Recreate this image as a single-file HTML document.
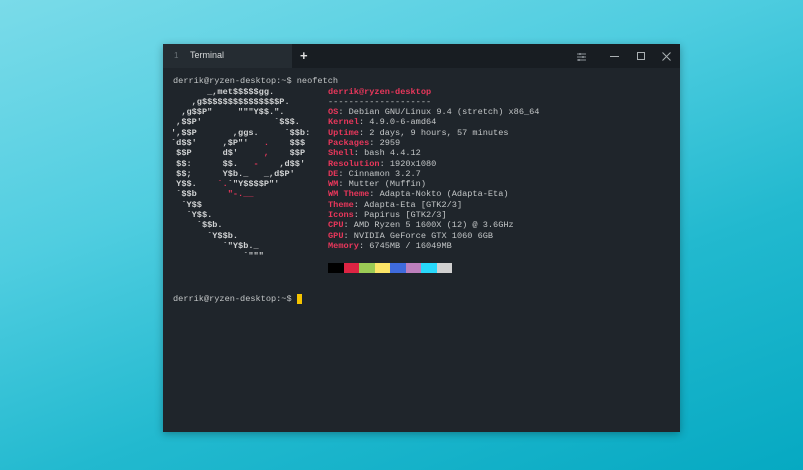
<!DOCTYPE html>
<html><head><meta charset="utf-8"><style>
html,body{margin:0;padding:0;width:803px;height:470px;overflow:hidden}
body{background:linear-gradient(160deg,#7adbe9 0%,#4fcde0 35%,#22b9cf 65%,#06a9c2 100%);position:relative;font-family:"Liberation Sans",sans-serif}
.win{position:absolute;left:163px;top:44px;width:517px;height:388px;background:#1f252b;box-shadow:0 2px 8px rgba(0,0,0,.3)}
.bar{position:absolute;left:0;top:0;width:517px;height:24px;background:#181d22}
.tab{position:absolute;left:0;top:0;width:129px;height:24px;background:#252c32;color:#d8dadb;font-size:9px}
.tab .n{position:absolute;left:11px;top:7px;color:#6b7378;font-size:8px}
.tab .t{position:absolute;left:27px;top:6px}
.plus{position:absolute;left:137px;top:4px;color:#e0e0e0;font-size:13px;font-weight:bold}
.ic{position:absolute;top:6px;color:#9aa1a5}
pre{margin:0;position:absolute;font-family:"Liberation Mono",monospace;font-size:8.6px;line-height:10.3px;color:#c3c6c7}
.lg{font-weight:bold;color:#d0d2d3}
.r{color:#e8375b;font-weight:bold}
.rn{color:#e8375b}
.sw{position:absolute;top:219px;height:10px;width:15.5px}
.cur{position:absolute;left:134px;top:250px;width:5px;height:10px;background:#f5c400}
</style></head><body>
<div class="win">
 <div class="bar"></div>
 <div class="tab"><span class="n">1</span><span class="t">Terminal</span></div>
 <div class="plus">+</div>
 <svg class="ic" style="left:414px;top:8px" width="9" height="9" viewBox="0 0 9 9" stroke="#8a9196" stroke-width="1" fill="none"><path d="M0 2h9M0 5h9M0 8h9"/><path d="M3 1v2M6 4v2M2 7v2" stroke-width="1.5"/></svg>
 <svg class="ic" style="left:447px;top:8px" width="9" height="9"><path d="M0 4.5h9" stroke="#aab0b3"/></svg>
 <svg class="ic" style="left:474px;top:8px" width="9" height="9"><rect x=".5" y=".5" width="7" height="7" stroke="#aab0b3" fill="none"/></svg>
 <svg class="ic" style="left:499px;top:8px" width="9" height="9"><path d="M.5 .5l8 8M8.5 .5l-8 8" stroke="#aab0b3"/></svg>
<pre style="left:10px;top:32px">derrik@ryzen-desktop:~$ neofetch</pre>
<pre class="lg" style="left:8px;top:42.5px">       _,met$$$$$gg.
    ,g$$$$$$$$$$$$$$$P.
  ,g$$P"     """Y$$.".
 ,$$P'              `$$$.
',$$P       ,ggs.     `$$b:
`d$$'     ,$P"'   <span class="rn">.</span>    $$$
 $$P      d$'     <span class="rn">,</span>    $$P
 $$:      $$.   <span class="rn">-</span>    ,d$$'
 $$;      Y$b._   _,d$P'
 Y$$.    <span class="rn">`.</span>`"Y$$$$P"'
 `$$b      <span class="rn">"-.__</span>
  `Y$$
   `Y$$.
     `$$b.
       `Y$$b.
          `"Y$b._
              `"""</pre>
<pre style="left:165px;top:42.5px"><span class="r">derrik@ryzen-desktop</span>
--------------------
<span class="r">OS</span>: Debian GNU/Linux 9.4 (stretch) x86_64
<span class="r">Kernel</span>: 4.9.0-6-amd64
<span class="r">Uptime</span>: 2 days, 9 hours, 57 minutes
<span class="r">Packages</span>: 2959
<span class="r">Shell</span>: bash 4.4.12
<span class="r">Resolution</span>: 1920x1080
<span class="r">DE</span>: Cinnamon 3.2.7
<span class="r">WM</span>: Mutter (Muffin)
<span class="r">WM Theme</span>: Adapta-Nokto (Adapta-Eta)
<span class="r">Theme</span>: Adapta-Eta [GTK2/3]
<span class="r">Icons</span>: Papirus [GTK2/3]
<span class="r">CPU</span>: AMD Ryzen 5 1600X (12) @ 3.6GHz
<span class="r">GPU</span>: NVIDIA GeForce GTX 1060 6GB
<span class="r">Memory</span>: 6745MB / 16049MB</pre>
<div class="sw" style="left:165px;background:#000"></div>
<div class="sw" style="left:180.5px;background:#dc2443"></div>
<div class="sw" style="left:196px;background:#9bcb55"></div>
<div class="sw" style="left:211.5px;background:#fbe466"></div>
<div class="sw" style="left:227px;background:#3f6bdc"></div>
<div class="sw" style="left:242.5px;background:#bc7fbc"></div>
<div class="sw" style="left:258px;background:#28d8fb"></div>
<div class="sw" style="left:273.5px;background:#d0d0d0"></div>
<pre style="left:10px;top:250px">derrik@ryzen-desktop:~$</pre>
<div class="cur"></div>
</div>
</body></html>
